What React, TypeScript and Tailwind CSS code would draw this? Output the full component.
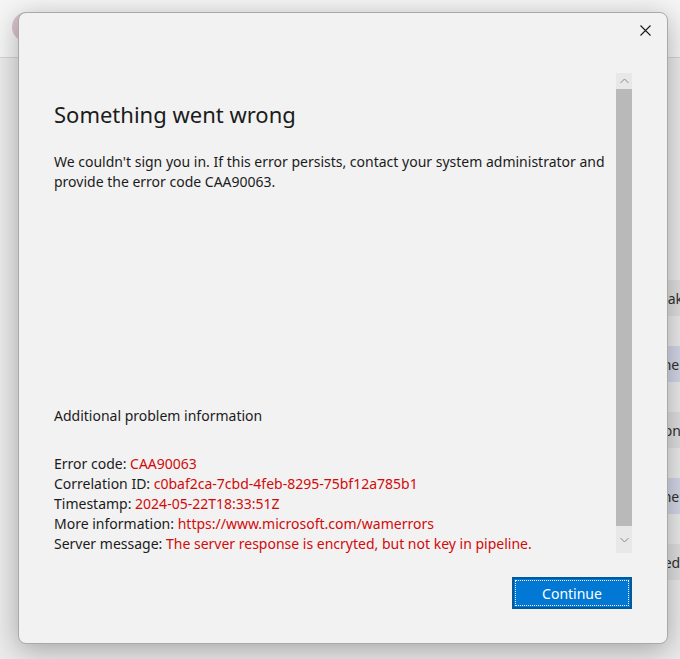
import React from "react";

const errorRows = [
  { label: "Error code:", value: "CAA90063" },
  { label: "Correlation ID:", value: "c0baf2ca-7cbd-4feb-8295-75bf12a785b1" },
  { label: "Timestamp:", value: "2024-05-22T18:33:51Z" },
  { label: "More information:", value: "https://www.microsoft.com/wamerrors" },
  { label: "Server message:", value: "The server response is encryted, but not key in pipeline." },
];

const bgRows = [
  { text: "Make", tint: "bg-[#dfdfdf]" },
  { text: "Shell", tint: "bg-[#d3d6e6]" },
  { text: "Conn", tint: "bg-[#dfdfdf]" },
  { text: "Shell", tint: "bg-[#d3d6e6]" },
  { text: "Red", tint: "bg-[#dfdfdf]" },
];

function Chevron({ up }: { up?: boolean }) {
  return (
    <svg width="9" height="6" viewBox="0 0 9 6" fill="none">
      <path
        d={up ? "M0.5 5L4.5 1L8.5 5" : "M0.5 1L4.5 5L8.5 1"}
        stroke="#8a8a8a"
        strokeWidth="1"
      />
    </svg>
  );
}

export default function App() {
  return (
    <div
      className="relative w-[680px] h-[659px] overflow-hidden bg-[#ebebeb]"
      style={{ fontFamily: '"Noto Sans", "Open Sans", sans-serif' }}
    >
      {/* page behind the dialog */}
      <div className="h-[58px] bg-[#f5f5f5] border-b border-[#d4d4d4] px-3 pt-3">
        <div className="w-[30px] h-[30px] rounded-full bg-[#d9c3cf]" />
      </div>
      <div className="flex flex-col gap-[30px] pt-[222px] pl-[640px]">
        {bgRows.map((r, i) => (
          <div
            key={i}
            className={`h-[36px] flex items-center pl-[15px] text-[14px] text-[#303030] whitespace-nowrap ${r.tint}`}
          >
            {r.text}
          </div>
        ))}
      </div>

      {/* dialog */}
      <div className="absolute left-[18px] top-[12px] w-[650px] h-[632px] rounded-[8px] border border-[#a9a9a9] bg-[#f2f2f2] shadow-[0_6px_28px_rgba(0,0,0,0.3)] flex flex-col">
        <div className="h-[60px] flex justify-end items-start pt-[10px] pr-[15px]">
          <button className="w-[14px] h-[14px] flex items-center justify-center">
            <svg width="11" height="11" viewBox="0 0 11 11" fill="none">
              <path d="M0.5 0.5L10.5 10.5M10.5 0.5L0.5 10.5" stroke="#1a1a1a" strokeWidth="1.1" />
            </svg>
          </button>
        </div>

        <div className="flex pl-[35px] pr-[35px] h-[480px]">
          <div className="flex-1 flex flex-col mb-[-1px] text-[14px] leading-[20px] text-[#1b1b1b]">
            <h1 className="mt-[25px] text-[22px] leading-[32px] font-normal text-[#1b1b1b]">
              Something went wrong
            </h1>
            <p className="mt-[22px]">
              We couldn't sign you in. If this error persists, contact your system administrator and
              provide the error code CAA90063.
            </p>
            <p className="mt-auto">Additional problem information</p>
            <div className="mt-[28px] flex flex-col">
              {errorRows.map((r) => (
                <div key={r.label} className="whitespace-nowrap">
                  {r.label} <span className="text-[#d10a0a]">{r.value}</span>
                </div>
              ))}
            </div>
          </div>

          {/* scrollbar */}
          <div className="w-[16px] flex flex-col bg-[#e8e8e8]">
            <div className="h-[16px] flex items-center justify-center">
              <Chevron up />
            </div>
            <div className="flex-1 bg-[#b9b9b9]" />
            <div className="h-[27px] flex items-center justify-center">
              <Chevron />
            </div>
          </div>
        </div>

        <div className="flex justify-end pr-[35px] pt-[24px]">
          <button className="w-[120px] h-[32px] bg-[#0078d4] border-2 border-[#005a9e] p-[1px]">
            <span className="flex h-full w-full items-center justify-center border border-dotted border-white text-[14px] text-white">
              Continue
            </span>
          </button>
        </div>
      </div>
    </div>
  );
}
